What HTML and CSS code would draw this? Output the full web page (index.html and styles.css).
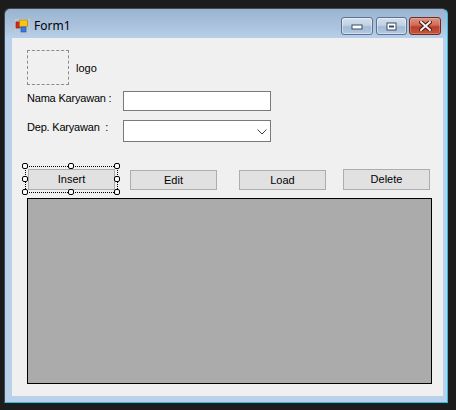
FILE: index.html
```html
<!DOCTYPE html>
<html>
<head>
<meta charset="utf-8">
<link rel="stylesheet" href="styles.css">
</head>
<body>
<div class="window">
  <div class="titlebar">
    <svg class="app-icon" width="15" height="14" viewBox="0 0 15 14">
      <rect x="0.5" y="0.5" width="14" height="13" fill="none" stroke="#c8c8c8" stroke-width="1"/>
      <rect x="1" y="3" width="4" height="6" fill="#d8261c" stroke="#8a1a12" stroke-width="0.6"/>
      <rect x="4.5" y="1" width="8" height="6.5" fill="#f7c515" stroke="#a77d0a" stroke-width="0.6"/>
      <rect x="6" y="8" width="5" height="5" fill="#3d7be0" stroke="#1f4f9c" stroke-width="0.6"/>
    </svg>
    <span class="title">Form1</span>
    <div class="caption-buttons">
      <div class="cbtn cbtn-min">
        <svg width="12" height="6" viewBox="0 0 12 6"><rect x="1" y="1" width="10" height="4" fill="#fff" stroke="#3b4a60" stroke-width="1"/></svg>
      </div>
      <div class="cbtn cbtn-max">
        <svg width="11" height="9" viewBox="0 0 11 9"><rect x="1" y="1" width="9" height="7" fill="#fff" stroke="#3b4a60" stroke-width="1"/><rect x="3" y="3.5" width="5" height="2" fill="#3b4a60"/></svg>
      </div>
      <div class="cbtn cbtn-close">
        <svg width="13" height="10" viewBox="0 0 13 10"><path d="M2 1 L11 9 M11 1 L2 9" stroke="#4a1510" stroke-width="4" stroke-linecap="square"/><path d="M2 1 L11 9 M11 1 L2 9" stroke="#f2f2f2" stroke-width="2" stroke-linecap="square"/></svg>
      </div>
    </div>
  </div>
  <div class="client">
    <div class="logo-row">
      <div class="logo-box"></div>
      <span class="logo-label">logo</span>
    </div>
    <div class="field-row row-nama">
      <span class="label">Nama Karyawan :</span>
      <div class="textbox"></div>
    </div>
    <div class="field-row row-dep">
      <span class="label">Dep. Karyawan  :</span>
      <div class="combo">
        <svg class="chev" width="10" height="6" viewBox="0 0 10 6"><path d="M0.5 0.5 L5 5 L9.5 0.5" fill="none" stroke="#444" stroke-width="1"/></svg>
      </div>
    </div>
    <div class="button-row">
      <div class="selected">
        <div class="btn btn-insert">Insert</div>
        <div class="sel-rect"></div>
        <span class="handle h-tl"></span>
        <span class="handle h-tm"></span>
        <span class="handle h-tr"></span>
        <span class="handle h-ml"></span>
        <span class="handle h-mr"></span>
        <span class="handle h-bl"></span>
        <span class="handle h-bm"></span>
        <span class="handle h-br"></span>
      </div>
      <div class="btn btn-edit">Edit</div>
      <div class="btn btn-load">Load</div>
      <div class="btn btn-delete">Delete</div>
    </div>
    <div class="grid-panel"></div>
  </div>
</div>
</body>
</html>
```

FILE: styles.css
```css
html, body {
  margin: 0;
  padding: 0;
}
body {
  background: #1c1c1c;
  width: 456px;
  height: 410px;
  overflow: hidden;
  font-family: "Liberation Sans", Arial, sans-serif;
}
.window {
  box-sizing: border-box;
  margin: 8px 0 0 4px;
  width: 444px;
  height: 395px;
  border: 1px solid #3e4a58;
  border-right-color: #27c0e2;
  border-bottom-color: #27c0e2;
  border-radius: 6px 6px 0 0;
  background: linear-gradient(to bottom, #9ab3cf 0px, #afc7e1 22px, #b9d1ea 30px, #b9d1ea 100%);
  padding: 0 4px 6px 7px;
  display: flex;
  flex-direction: column;
}
.titlebar {
  height: 29px;
  display: flex;
  align-items: flex-start;
  position: relative;
}
.app-icon {
  margin: 10px 0 0 3px;
  display: block;
}
.title {
  font-family: "Noto Sans", "Open Sans", sans-serif;
  font-size: 12px;
  line-height: 16px;
  margin: 9px 0 0 4px;
  color: #000;
}
.caption-buttons {
  margin-left: auto;
  margin-right: 2px;
  margin-top: 8px;
  display: flex;
}
.cbtn {
  box-sizing: border-box;
  height: 18px;
  width: 31px;
  border: 1px solid #5d7190;
  border-radius: 3px;
  background: linear-gradient(to bottom, #d4e0ee 0%, #c0d2e6 45%, #a3bbd6 55%, #b2c8e0 100%);
  display: flex;
  align-items: center;
  justify-content: center;
  box-shadow: inset 0 0 0 1px rgba(255,255,255,0.4);
}
.cbtn-min {
  width: 32px;
  margin-right: 3px;
  align-items: flex-end;
  padding-bottom: 4px;
}
.cbtn-max {
  margin-right: 2px;
}
.cbtn-close {
  width: 32px;
  border-color: #6e2a24;
  background: linear-gradient(to bottom, #dd9585 0%, #d06a55 45%, #b9402b 55%, #c8553c 100%);
  box-shadow: inset 0 0 0 1px rgba(255,200,190,0.3);
}
.cbtn svg {
  display: block;
}
.client {
  width: 431px;
  height: 358px;
  background: #f0f0f0;
  padding-left: 15px;
  box-sizing: border-box;
  font-size: 11px;
  color: #000;
}
.logo-row {
  padding-top: 12px;
  display: flex;
  align-items: center;
}
.logo-box {
  box-sizing: border-box;
  width: 42px;
  height: 35px;
  border: 1px dashed #8c8c8c;
}
.logo-label {
  margin-left: 7px;
  line-height: 13px;
  margin-top: 2px;
}
.field-row {
  display: flex;
  align-items: flex-start;
}
.row-nama {
  margin-top: 6px;
}
.row-dep {
  margin-top: 9px;
}
.label {
  width: 96px;
  line-height: 13px;
  white-space: pre;
  margin-top: 1px;
  letter-spacing: -0.2px;
}
.textbox {
  box-sizing: border-box;
  width: 148px;
  height: 20px;
  border: 1px solid #7a7a7a;
  background: #fff;
}
.combo {
  box-sizing: border-box;
  width: 148px;
  height: 22px;
  border: 1px solid #7a7a7a;
  background: #fff;
  display: flex;
  align-items: center;
  justify-content: flex-end;
  padding-right: 3px;
}
.chev {
  display: block;
  margin-top: 2px;
}
.button-row {
  margin-top: 27px;
  display: flex;
  align-items: flex-start;
  height: 21px;
}
.btn {
  box-sizing: border-box;
  width: 87px;
  height: 21px;
  background: #e1e1e1;
  border: 1px solid #adadad;
  display: flex;
  align-items: center;
  justify-content: center;
  line-height: 13px;
}
.selected {
  position: relative;
  margin-left: 1px;
}
.sel-rect {
  position: absolute;
  left: -3px;
  top: -3px;
  width: 93px;
  height: 27px;
  box-sizing: border-box;
  border: 1px dotted #000;
}
.handle {
  position: absolute;
  width: 6px;
  height: 6px;
  box-sizing: border-box;
  border: 1px solid #000;
  border-radius: 2px;
  background: #fff;
}
.h-tl { left: -6px; top: -6px; }
.h-tm { left: 40px; top: -6px; }
.h-tr { left: 86px; top: -6px; }
.h-ml { left: -6px; top: 7px; }
.h-mr { left: 86px; top: 7px; }
.h-bl { left: -6px; top: 20px; }
.h-bm { left: 40px; top: 20px; }
.h-br { left: 86px; top: 20px; }
.btn-edit {
  margin-left: 15px;
  margin-top: 1px;
  height: 20px;
}
.btn-load {
  margin-left: 22px;
  margin-top: 1px;
  height: 20px;
}
.btn-delete {
  margin-left: 17px;
  height: 21px;
}
.grid-panel {
  box-sizing: border-box;
  margin-top: 8px;
  width: 405px;
  height: 186px;
  background: #ababab;
  border: 1px solid #000;
}
```
